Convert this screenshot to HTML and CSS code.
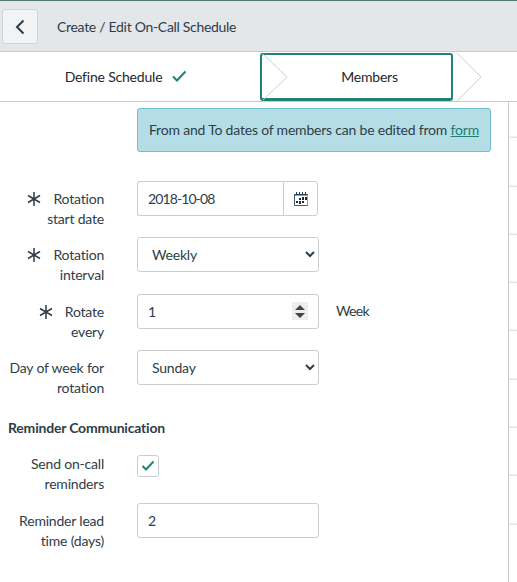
FILE: index.html
```html
<!DOCTYPE html>
<html lang="en">
<head>
  <meta charset="UTF-8">
  <title>Create / Edit On-Call Schedule</title>
  <link rel="stylesheet" href="styles.css">
</head>
<body>
  <header class="topbar">
    <button class="back-button" type="button" aria-label="Back">
      <svg width="12" height="18" viewBox="0 0 12 18"><path d="M9.5 2.5 3 9l6.5 6.5" fill="none" stroke="#2e3d49" stroke-width="2"/></svg>
    </button>
    <span class="topbar-title">Create / Edit On-Call Schedule</span>
  </header>

  <nav class="steps">
    <div class="step step-done">
      Define Schedule
      <svg class="step-check" width="16" height="14" viewBox="0 0 16 14"><path d="M2 7.5 6 11.5 14.5 2.5" fill="none" stroke="#1f8476" stroke-width="2"/></svg>
    </div>
    <div class="step step-active">
      <svg class="step-arrow" width="26" height="46" viewBox="0 0 26 46"><path d="M1 0 25 23 1 46" fill="none" stroke="#cfcfcf"/></svg>
      Members
    </div>
    <svg class="step-next" width="26" height="48" viewBox="0 0 26 48"><path d="M1 0 25 24 1 48" fill="none" stroke="#cfcfcf"/></svg>
  </nav>

  <div class="page">
    <main class="content">
      <div class="notice-row">
        <div class="notice">From and To dates of members can be edited from <a href="#">form</a></div>
      </div>

      <div class="field field-first">
        <label class="field-label">
          <svg class="required" width="14" height="14" viewBox="0 0 14 14"><path d="M7 0v14M1 3.5l12 7M13 3.5l-12 7" fill="none" stroke="#2e3d49" stroke-width="1.5"/></svg>Rotation<br>start date
        </label>
        <div class="input-group">
          <input class="input date" type="text" value="2018-10-08">
          <span class="input-addon">
            <svg width="14" height="14" viewBox="0 0 14 14">
              <path d="M0.5 2.5h13v11h-13z" fill="#fff" stroke="#3a5a78"/>
              <path d="M2 0h1v2H2zM5 0h1v2H5zM8 0h1v2H8zM11 0h1v2h-1z" fill="#2b3f52"/>
              <path d="M1 2h12v1.5H1z" fill="#2b3f52"/>
              <path d="M8 5h2v3H8zM11 5h2v3h-2zM5 6h2v2H5zM2 9h2v2H2zM5 9h2v3H5zM8 9h2v2H8z" fill="#1f2d3a"/>
              <path d="M13.5 3v10.5" stroke="#d99a3c"/>
            </svg>
          </span>
        </div>
      </div>

      <div class="field">
        <label class="field-label">
          <svg class="required" width="14" height="14" viewBox="0 0 14 14"><path d="M7 0v14M1 3.5l12 7M13 3.5l-12 7" fill="none" stroke="#2e3d49" stroke-width="1.5"/></svg>Rotation<br>interval
        </label>
        <select class="input select"><option>Weekly</option></select>
      </div>

      <div class="field">
        <label class="field-label">
          <svg class="required" width="14" height="14" viewBox="0 0 14 14"><path d="M7 0v14M1 3.5l12 7M13 3.5l-12 7" fill="none" stroke="#2e3d49" stroke-width="1.5"/></svg>Rotate<br>every
        </label>
        <div class="number-wrap">
          <input class="input number" type="number" value="1">
          <span class="spin">
            <svg width="16" height="18" viewBox="0 0 16 18"><path d="M3 8 8 3l5 5zM3 11h10l-5 5z" fill="#444"/></svg>
          </span>
        </div>
        <span class="field-unit">Week</span>
      </div>

      <div class="field">
        <label class="field-label">Day of week for<br>rotation</label>
        <select class="input select"><option>Sunday</option></select>
      </div>

      <h2 class="section-title">Reminder Communication</h2>

      <div class="field field-check">
        <label class="field-label">Send on-call<br>reminders</label>
        <span class="checkbox">
          <svg width="14" height="12" viewBox="0 0 14 12"><path d="M1.5 6 5 9.5 12.5 1.5" fill="none" stroke="#1f8476" stroke-width="2"/></svg>
        </span>
      </div>

      <div class="field">
        <label class="field-label">Reminder lead<br>time (days)</label>
        <input class="input" type="text" value="2">
      </div>
    </main>
    <aside class="rail"></aside>
  </div>
</body>
</html>
```

FILE: styles.css
```css
* {
  box-sizing: border-box;
}

body {
  margin: 0;
  height: 582px;
  overflow: hidden;
  background: #fff;
  color: #2e3d49;
  font-family: "Lato", "Open Sans", sans-serif;
  font-size: 14px;
  letter-spacing: -0.2px;
}

/* Top bar */
.topbar {
  display: flex;
  align-items: center;
  height: 52px;
  padding: 1px 0 0 2px;
  background: #e4e7ea;
  border-top: 1px solid #4f7a6c;
  border-bottom: 1px solid #c8cacc;
}

.back-button {
  display: flex;
  align-items: center;
  justify-content: center;
  width: 36px;
  height: 35px;
  padding: 0;
  background: #f2f3f5;
  border: 1px solid #cfd2d6;
  border-radius: 3px;
}

.topbar-title {
  margin-left: 19px;
  letter-spacing: -0.3px;
}

/* Steps */
.steps {
  position: relative;
  display: flex;
  height: 50px;
  border-bottom: 1px solid #c8cacc;
  color: #25282b;
}

.step {
  display: flex;
  align-items: center;
  justify-content: center;
}

.step-done {
  width: 260px;
  padding: 0 8px 1px 0;
}

.step-check {
  margin-left: 9px;
}

.step-active {
  position: relative;
  width: 193px;
  height: 48px;
  margin: 1px 0 0;
  border: 2px solid #1f8476;
  border-bottom-width: 3px;
  border-radius: 3px;
  padding-left: 26px;
}

.step-arrow {
  position: absolute;
  left: 0;
  top: -1px;
}

.step-next {
  position: absolute;
  left: 456px;
  top: 1px;
}

/* Page body */
.page {
  display: flex;
  height: 480px;
}

.content {
  width: 508px;
  padding-top: 6px;
}

.rail {
  width: 9px;
  height: 480px;
  border-left: 1px solid #c8cacc;
  background: repeating-linear-gradient(to bottom, transparent 0, transparent 47.3px, #d6d6d6 47.3px, #d6d6d6 48.3px) 0 -12.3px;
}

.notice-row {
  padding-left: 137px;
}

.notice {
  width: 354px;
  height: 44px;
  padding-left: 11px;
  line-height: 42px;
  background: #b4dde5;
  border: 1px solid #6fbdd0;
  border-radius: 3px;
  white-space: nowrap;
}

.notice a {
  color: #1f7f72;
}

/* Form fields */
.field {
  display: flex;
  align-items: flex-start;
  height: 56.4px;
}

.field-first {
  margin-top: 29px;
}

.field-label {
  width: 104px;
  flex-shrink: 0;
  padding-top: 8px;
  margin-right: 33px;
  text-align: right;
  line-height: 20px;
}

.required {
  margin-right: 12px;
  vertical-align: -2px;
}

.input {
  width: 182px;
  height: 35px;
  padding: 0 10px;
  background: #fff;
  border: 1px solid #cbced1;
  border-radius: 3px;
  color: #2e3d49;
  font: inherit;
  letter-spacing: inherit;
  outline: none;
}

.number::-webkit-inner-spin-button {
  display: none;
}

.number-wrap {
  position: relative;
}

.spin {
  position: absolute;
  left: 155px;
  top: 8px;
  display: flex;
  background: #eeeeee;
}

.input-group {
  display: flex;
  width: 181px;
}

.input-group .input {
  width: 146px;
  border-right: none;
  border-radius: 3px 0 0 3px;
}

.input-group .date {
  letter-spacing: -0.9px;
}

.input-addon {
  display: flex;
  align-items: center;
  justify-content: center;
  width: 35px;
  height: 35px;
  border: 1px solid #cbced1;
  border-radius: 0 3px 3px 0;
}

.field-unit {
  margin-left: 17px;
  line-height: 33px;
  letter-spacing: -0.7px;
}

.section-title {
  margin: 0 0 17px 8px;
  padding-top: 11px;
  font-size: 14px;
  font-weight: 700;
  line-height: 20px;
}

.field-check {
  height: 48px;
}

.field-check .field-label {
  padding-top: 0;
  margin-top: -1px;
}

.checkbox {
  display: flex;
  align-items: center;
  justify-content: center;
  width: 22px;
  height: 22px;
  border: 1px solid #cbced1;
  border-radius: 3px;
}
```
